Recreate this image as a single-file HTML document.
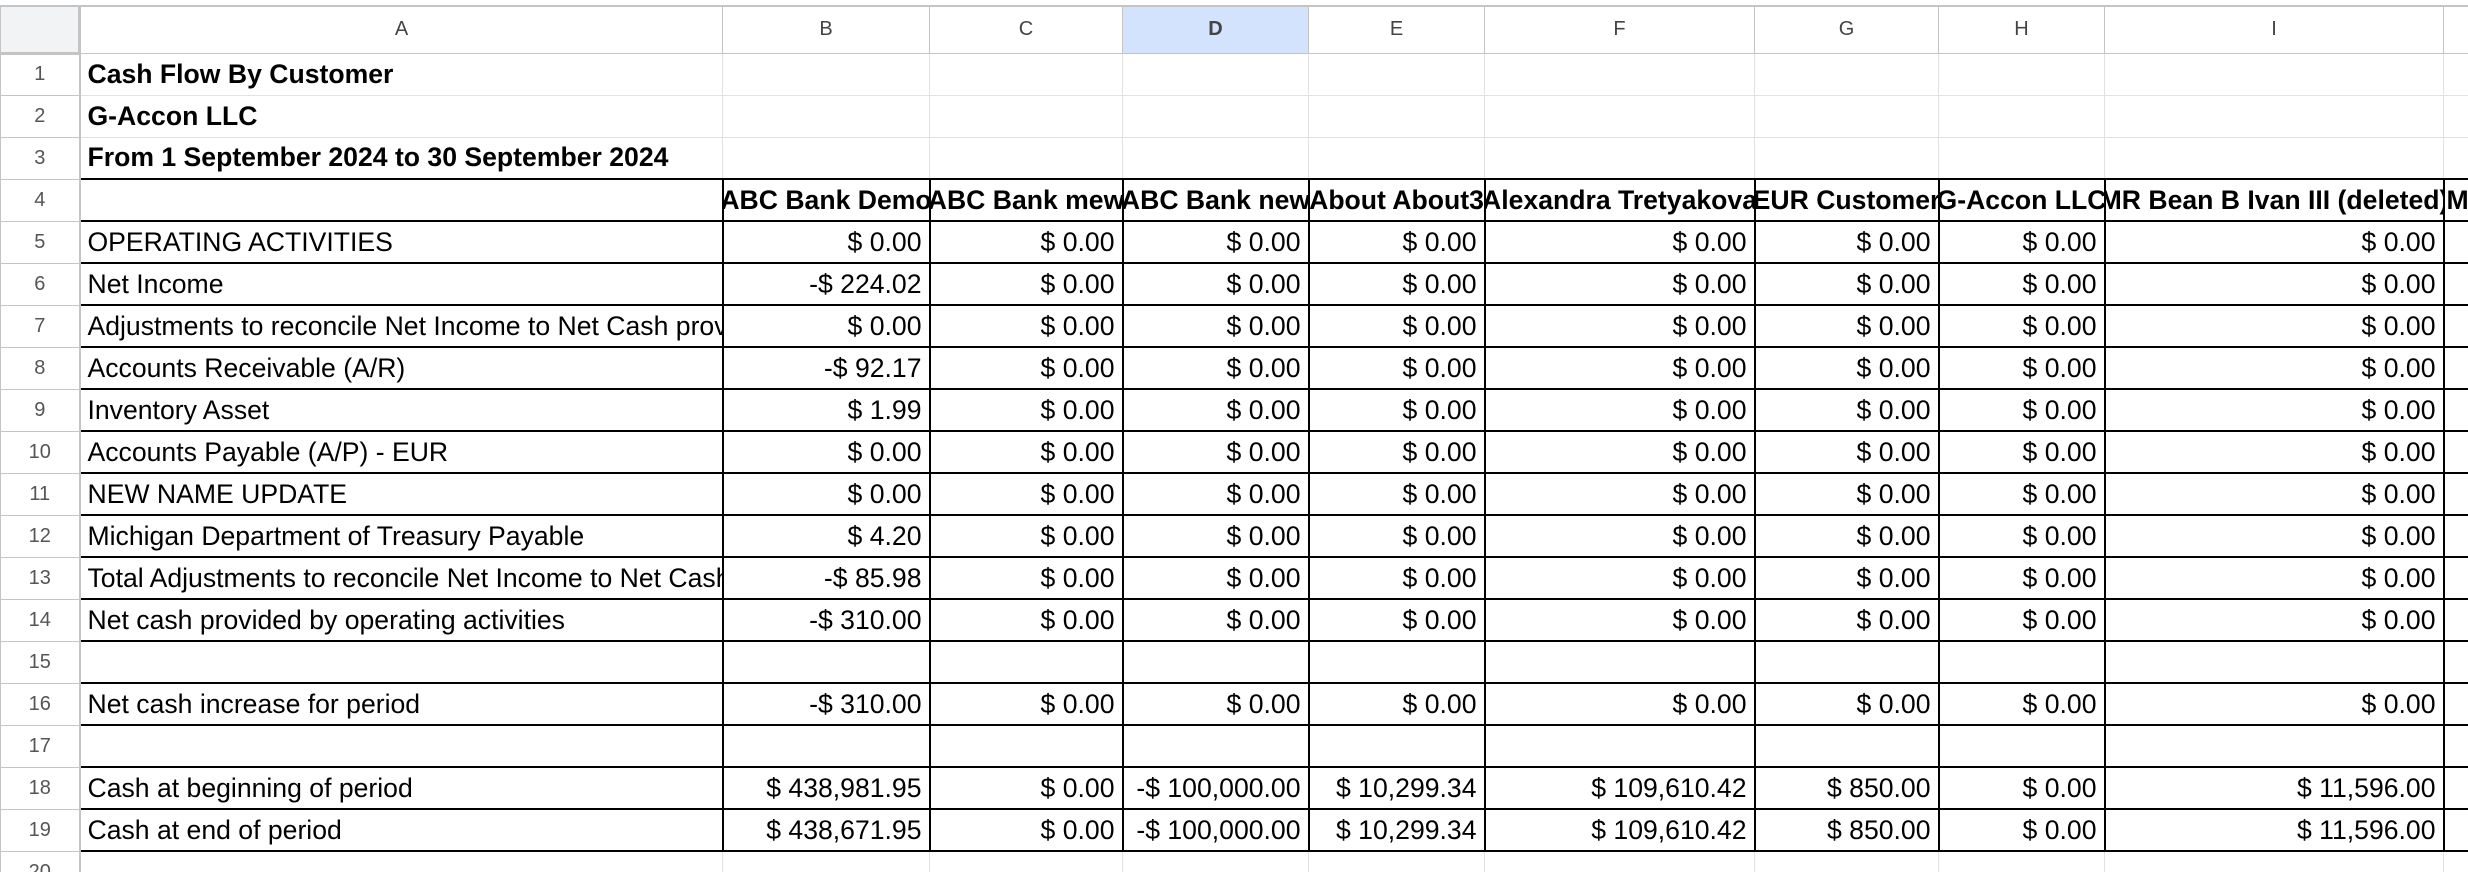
<!DOCTYPE html>
<html><head><meta charset="utf-8"><style>
html,body{margin:0;padding:0;background:#fff;width:2468px;height:872px;overflow:hidden;position:relative}
table{border-collapse:collapse;table-layout:fixed;width:2543px;position:absolute;top:5px;left:0;font-family:"Liberation Sans",Arial,sans-serif}
td{padding:0 7px;overflow:hidden;white-space:nowrap;border:1px solid #e2e2e2;font-size:26.6px;height:42px;color:#000;box-sizing:border-box}
tr.h td{height:47px;font-size:20px;color:#444;text-align:center;border-color:#c4c4c4;border-top:2px solid #c4c4c4}
td.rh{font-size:20px;color:#555;text-align:center;padding:0;border-color:#c4c4c4;border-right:2px solid #c4c4c4}
td.corner{background:#f1f3f4;border-right:3px solid #c4c4c4;border-bottom:3px solid #c4c4c4}
td.sel{background:#d3e3fd;font-weight:bold;color:#0b57d0}
td.r{text-align:right}
.bd td.c{border:2px solid #000}
.bd td.a{border-top:2px solid #000;border-bottom:2px solid #000;border-right:2px solid #000}
b{font-weight:bold}
.ctr{display:flex;justify-content:center;overflow:hidden;font-weight:bold}
.ctr span{white-space:nowrap}
</style></head><body>
<table>
<colgroup><col style="width:79px"><col style="width:643px"><col style="width:207px"><col style="width:193px"><col style="width:186px"><col style="width:176px"><col style="width:270px"><col style="width:184px"><col style="width:166px"><col style="width:339px"><col style="width:100px"></colgroup>
<tr class="h"><td class="corner"></td><td>A</td><td>B</td><td>C</td><td class="sel">D</td><td>E</td><td>F</td><td>G</td><td>H</td><td>I</td><td></td></tr>
<tr><td class="rh">1</td><td><b>Cash Flow By Customer</b></td><td></td><td></td><td></td><td></td><td></td><td></td><td></td><td></td><td></td></tr>
<tr><td class="rh">2</td><td><b>G-Accon LLC</b></td><td></td><td></td><td></td><td></td><td></td><td></td><td></td><td></td><td></td></tr>
<tr><td class="rh">3</td><td><b>From 1 September 2024 to 30 September 2024</b></td><td></td><td></td><td></td><td></td><td></td><td></td><td></td><td></td><td></td></tr>
<tr class="bd"><td class="rh">4</td><td style="border-top:2px solid #000;border-bottom:2px solid #000"></td><td class="c" style="padding:0"><div class="ctr"><span>ABC Bank Demo</span></div></td><td class="c" style="padding:0"><div class="ctr"><span>ABC Bank mew</span></div></td><td class="c" style="padding:0"><div class="ctr"><span>ABC Bank new</span></div></td><td class="c" style="padding:0"><div class="ctr"><span>About About3</span></div></td><td class="c" style="padding:0"><div class="ctr"><span>Alexandra Tretyakova</span></div></td><td class="c" style="padding:0"><div class="ctr"><span>EUR Customer</span></div></td><td class="c" style="padding:0"><div class="ctr"><span>G-Accon LLC</span></div></td><td class="c" style="padding:0"><div class="ctr"><span>MR Bean B Ivan III (deleted)</span></div></td><td class="c" style="padding:0 0 0 2px"><b>Mr Smith</b></td></tr>
<tr class="bd"><td class="rh">5</td><td class="a">OPERATING ACTIVITIES</td><td class="c r">$ 0.00</td><td class="c r">$ 0.00</td><td class="c r">$ 0.00</td><td class="c r">$ 0.00</td><td class="c r">$ 0.00</td><td class="c r">$ 0.00</td><td class="c r">$ 0.00</td><td class="c r">$ 0.00</td><td class="c"></td></tr>
<tr class="bd"><td class="rh">6</td><td class="a">Net Income</td><td class="c r">-$ 224.02</td><td class="c r">$ 0.00</td><td class="c r">$ 0.00</td><td class="c r">$ 0.00</td><td class="c r">$ 0.00</td><td class="c r">$ 0.00</td><td class="c r">$ 0.00</td><td class="c r">$ 0.00</td><td class="c"></td></tr>
<tr class="bd"><td class="rh">7</td><td class="a">Adjustments to reconcile Net Income to Net Cash provided by operating activities</td><td class="c r">$ 0.00</td><td class="c r">$ 0.00</td><td class="c r">$ 0.00</td><td class="c r">$ 0.00</td><td class="c r">$ 0.00</td><td class="c r">$ 0.00</td><td class="c r">$ 0.00</td><td class="c r">$ 0.00</td><td class="c"></td></tr>
<tr class="bd"><td class="rh">8</td><td class="a">Accounts Receivable (A/R)</td><td class="c r">-$ 92.17</td><td class="c r">$ 0.00</td><td class="c r">$ 0.00</td><td class="c r">$ 0.00</td><td class="c r">$ 0.00</td><td class="c r">$ 0.00</td><td class="c r">$ 0.00</td><td class="c r">$ 0.00</td><td class="c"></td></tr>
<tr class="bd"><td class="rh">9</td><td class="a">Inventory Asset</td><td class="c r">$ 1.99</td><td class="c r">$ 0.00</td><td class="c r">$ 0.00</td><td class="c r">$ 0.00</td><td class="c r">$ 0.00</td><td class="c r">$ 0.00</td><td class="c r">$ 0.00</td><td class="c r">$ 0.00</td><td class="c"></td></tr>
<tr class="bd"><td class="rh">10</td><td class="a">Accounts Payable (A/P) - EUR</td><td class="c r">$ 0.00</td><td class="c r">$ 0.00</td><td class="c r">$ 0.00</td><td class="c r">$ 0.00</td><td class="c r">$ 0.00</td><td class="c r">$ 0.00</td><td class="c r">$ 0.00</td><td class="c r">$ 0.00</td><td class="c"></td></tr>
<tr class="bd"><td class="rh">11</td><td class="a">NEW NAME UPDATE</td><td class="c r">$ 0.00</td><td class="c r">$ 0.00</td><td class="c r">$ 0.00</td><td class="c r">$ 0.00</td><td class="c r">$ 0.00</td><td class="c r">$ 0.00</td><td class="c r">$ 0.00</td><td class="c r">$ 0.00</td><td class="c"></td></tr>
<tr class="bd"><td class="rh">12</td><td class="a">Michigan Department of Treasury Payable</td><td class="c r">$ 4.20</td><td class="c r">$ 0.00</td><td class="c r">$ 0.00</td><td class="c r">$ 0.00</td><td class="c r">$ 0.00</td><td class="c r">$ 0.00</td><td class="c r">$ 0.00</td><td class="c r">$ 0.00</td><td class="c"></td></tr>
<tr class="bd"><td class="rh">13</td><td class="a">Total Adjustments to reconcile Net Income to Net Cash provided by operating activities</td><td class="c r">-$ 85.98</td><td class="c r">$ 0.00</td><td class="c r">$ 0.00</td><td class="c r">$ 0.00</td><td class="c r">$ 0.00</td><td class="c r">$ 0.00</td><td class="c r">$ 0.00</td><td class="c r">$ 0.00</td><td class="c"></td></tr>
<tr class="bd"><td class="rh">14</td><td class="a">Net cash provided by operating activities</td><td class="c r">-$ 310.00</td><td class="c r">$ 0.00</td><td class="c r">$ 0.00</td><td class="c r">$ 0.00</td><td class="c r">$ 0.00</td><td class="c r">$ 0.00</td><td class="c r">$ 0.00</td><td class="c r">$ 0.00</td><td class="c"></td></tr>
<tr class="bd"><td class="rh">15</td><td class="a"></td><td class="c"></td><td class="c"></td><td class="c"></td><td class="c"></td><td class="c"></td><td class="c"></td><td class="c"></td><td class="c"></td><td class="c"></td></tr>
<tr class="bd"><td class="rh">16</td><td class="a">Net cash increase for period</td><td class="c r">-$ 310.00</td><td class="c r">$ 0.00</td><td class="c r">$ 0.00</td><td class="c r">$ 0.00</td><td class="c r">$ 0.00</td><td class="c r">$ 0.00</td><td class="c r">$ 0.00</td><td class="c r">$ 0.00</td><td class="c"></td></tr>
<tr class="bd"><td class="rh">17</td><td class="a"></td><td class="c"></td><td class="c"></td><td class="c"></td><td class="c"></td><td class="c"></td><td class="c"></td><td class="c"></td><td class="c"></td><td class="c"></td></tr>
<tr class="bd"><td class="rh">18</td><td class="a">Cash at beginning of period</td><td class="c r">$ 438,981.95</td><td class="c r">$ 0.00</td><td class="c r">-$ 100,000.00</td><td class="c r">$ 10,299.34</td><td class="c r">$ 109,610.42</td><td class="c r">$ 850.00</td><td class="c r">$ 0.00</td><td class="c r">$ 11,596.00</td><td class="c"></td></tr>
<tr class="bd"><td class="rh">19</td><td class="a">Cash at end of period</td><td class="c r">$ 438,671.95</td><td class="c r">$ 0.00</td><td class="c r">-$ 100,000.00</td><td class="c r">$ 10,299.34</td><td class="c r">$ 109,610.42</td><td class="c r">$ 850.00</td><td class="c r">$ 0.00</td><td class="c r">$ 11,596.00</td><td class="c"></td></tr>
<tr><td class="rh">20</td><td></td><td></td><td></td><td></td><td></td><td></td><td></td><td></td><td></td><td></td></tr>
</table>
</body></html>
